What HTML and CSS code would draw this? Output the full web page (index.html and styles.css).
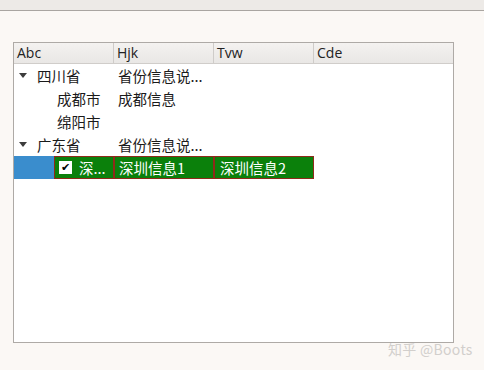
FILE: index.html
```html
<!DOCTYPE html>
<html>
<head>
<meta charset="utf-8">
<link rel="stylesheet" href="styles.css">
</head>
<body>
<div class="topbar"></div>
<div class="tree">
  <div class="header">
    <div class="hc c1">Abc</div>
    <div class="hc c2">Hjk</div>
    <div class="hc c3">Tvw</div>
    <div class="hc c4">Cde</div>
  </div>
  <div class="row">
    <div class="cell c1"><span class="arrow"></span><span class="t">四川省</span></div>
    <div class="cell c2">省份信息说...</div>
    <div class="cell c3"></div>
    <div class="cell c4"></div>
  </div>
  <div class="row">
    <div class="cell c1 child">成都市</div>
    <div class="cell c2">成都信息</div>
    <div class="cell c3"></div>
    <div class="cell c4"></div>
  </div>
  <div class="row">
    <div class="cell c1 child">绵阳市</div>
    <div class="cell c2"></div>
    <div class="cell c3"></div>
    <div class="cell c4"></div>
  </div>
  <div class="row">
    <div class="cell c1"><span class="arrow"></span><span class="t">广东省</span></div>
    <div class="cell c2">省份信息说...</div>
    <div class="cell c3"></div>
    <div class="cell c4"></div>
  </div>
  <div class="row sel">
    <div class="cell c1 selc1">
      <span class="branch"></span>
      <span class="green g1"><span class="check">✔</span><span>深...</span></span>
    </div>
    <div class="cell c2 green">深圳信息1</div>
    <div class="cell c3 green">深圳信息2</div>
    <div class="cell c4"></div>
  </div>
</div>
<div class="watermark">知乎 @Boots</div>
</body>
</html>
```
FILE: styles.css
```css
html, body {
  margin: 0;
  padding: 0;
}
body {
  background: #fbf8f5;
  width: 484px;
  height: 370px;
  position: relative;
  overflow: hidden;
  font-family: "Open Sans", "Noto Sans CJK SC", sans-serif;
  font-size: 13px;
  color: #1a1a1a;
}
.topbar {
  height: 10px;
  background: #edeae7;
  border-bottom: 1px solid #a9a5a1;
}
.tree {
  margin: 31px 0 0 13px;
  width: 439px;
  height: 299px;
  border: 1px solid #aeaaa6;
  background: #ffffff;
}
.header {
  display: flex;
  height: 20px;
  background: linear-gradient(#f4f2f0, #e9e7e5);
  border-bottom: 1px solid #d0cdca;
}
.hc {
  box-sizing: border-box;
  padding-left: 3px;
  line-height: 20px;
  border-right: 1px solid #cfccc9;
  font-size: 14px;
  color: #222;
}
.c1 { width: 100px; flex: none; box-sizing: border-box; }
.c2 { width: 100px; flex: none; box-sizing: border-box; }
.c3 { width: 100px; flex: none; box-sizing: border-box; }
.c4 { flex: 1; border-right: none; }
.row {
  display: flex;
  height: 23px;
  font-family: "Noto Sans CJK SC", sans-serif;
  font-size: 14.5px;
  color: #1a1a1a;
}
.cell {
  line-height: 23px;
  white-space: nowrap;
  overflow: hidden;
}
.row .c2 { padding-left: 4px; }
.row .c1 {
  display: flex;
  align-items: center;
}
.arrow {
  width: 0;
  height: 0;
  border-left: 4px solid transparent;
  border-right: 4px solid transparent;
  border-top: 5px solid #3c3c3c;
  margin-left: 5px;
  margin-right: 10px;
}
.child { padding-left: 43px; }
.row .selc1 { align-items: stretch; }
.branch {
  width: 40px;
  flex: none;
  background: #3a8dcd;
}
.green {
  background: #0b800b;
  color: #ffffff;
  border: 1px solid #8f2a1a;
  box-sizing: border-box;
  line-height: 21px;
}
.g1 {
  flex: 1;
  display: flex;
  align-items: center;
  padding-left: 4px;
}
.check {
  width: 13px;
  height: 13px;
  flex: none;
  background: #fff;
  color: #000;
  font-family: "DejaVu Sans", sans-serif;
  font-size: 11px;
  line-height: 13px;
  text-align: center;
  margin-right: 7px;
  font-weight: bold;
}
.row .c2.green { padding-left: 4px; }
.row .c3.green { padding-left: 5px; }
.watermark {
  position: absolute;
  left: 388px;
  top: 339px;
  font-family: "Noto Sans CJK SC", sans-serif;
  font-size: 14px;
  color: #d2cfcc;
  letter-spacing: 0.3px;
}
```
